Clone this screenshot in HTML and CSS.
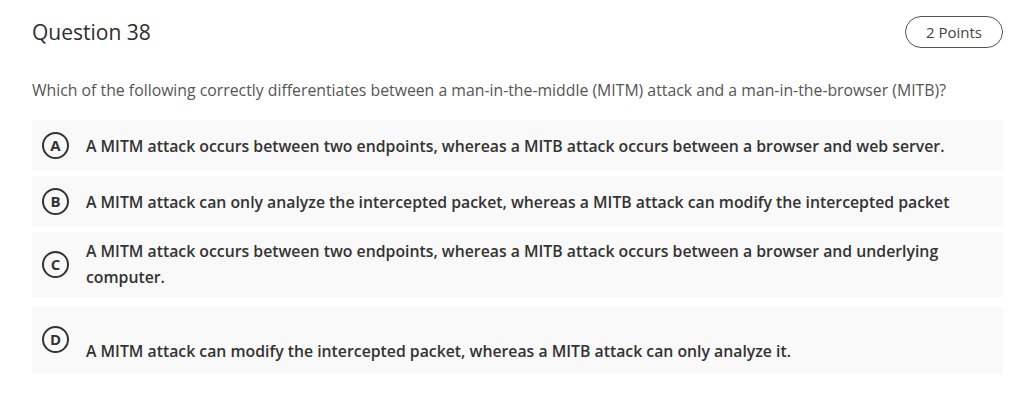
FILE: index.html
```html
<!DOCTYPE html>
<html>
<head>
<meta charset="utf-8">
<link rel="stylesheet" href="styles.css">
</head>
<body>
<div class="page">
  <div class="header">
    <h1 class="title">Question 38</h1>
    <span class="points">2 Points</span>
  </div>
  <p class="prompt">Which of the following correctly differentiates between a man-in-the-middle (MITM) attack and a man-in-the-browser (MITB)?</p>
  <ul class="options">
    <li class="option opt-a"><span class="letter">A</span><span class="text">A MITM attack occurs between two endpoints, whereas a MITB attack occurs between a browser and web server.</span></li>
    <li class="option opt-b"><span class="letter">B</span><span class="text">A MITM attack can only analyze the intercepted packet, whereas a MITB attack can modify the intercepted packet</span></li>
    <li class="option opt-c"><span class="letter">C</span><span class="text">A MITM attack occurs between two endpoints, whereas a MITB attack occurs between a browser and underlying computer.</span></li>
    <li class="option opt-d"><span class="letter">D</span><span class="text">A MITM attack can modify the intercepted packet, whereas a MITB attack can only analyze it.</span></li>
  </ul>
</div>
</body>
</html>
```

FILE: styles.css
```css
html, body {
  margin: 0;
  padding: 0;
  background: #ffffff;
}
body {
  font-family: "Open Sans", "Noto Sans", sans-serif;
  color: #333;
}
.page {
  padding: 16px 9px 0 32px;
}
.header {
  display: flex;
  justify-content: space-between;
  align-items: center;
  height: 32px;
}
.title {
  margin: 0;
  font-size: 21px;
  font-weight: 400;
  color: #2e2e2e;
}
.points {
  display: inline-flex;
  align-items: center;
  justify-content: center;
  box-sizing: border-box;
  height: 32px;
  width: 98px;
  border: 1px solid #555;
  border-radius: 16px;
  font-size: 15px;
  color: #444;
}
.prompt {
  margin: 32px 0 0 0;
  font-size: 15.8px;
  line-height: 20px;
  color: #555;
}
.options {
  list-style: none;
  margin: 20px 0 0 0;
  padding: 0;
  display: flex;
  flex-direction: column;
  gap: 5px;
  width: 971px;
}
.option {
  display: flex;
  align-items: center;
  gap: 17px;
  background: #f9f9f9;
  padding: 12px 10px;
  font-size: 15.8px;
  font-weight: 600;
  line-height: 26px;
  color: #333;
}
.opt-c {
  padding: 6px 60px 7px 10px;
}
.opt-d {
  margin-top: 5px;
  align-items: flex-start;
  padding: 19px 10px 10px;
}
.opt-d .text {
  padding-top: 12px;
}
.letter {
  flex: none;
  box-sizing: border-box;
  width: 27px;
  height: 27px;
  border: 2px solid #333;
  border-radius: 50%;
  display: flex;
  align-items: center;
  justify-content: center;
  font-size: 15px;
  font-weight: 700;
  line-height: 1;
  color: #333;
}
```
